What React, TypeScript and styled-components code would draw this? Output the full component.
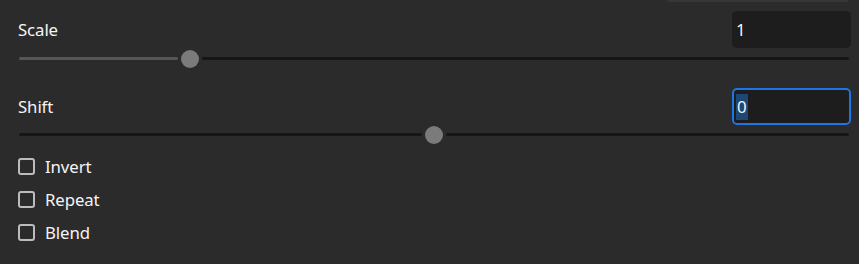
import React from "react";
import styled, { createGlobalStyle } from "styled-components";

const Global = createGlobalStyle`
  html, body { margin: 0; padding: 0; background: #2b2b2b; }
  body { font-family: "Noto Sans", "Open Sans", sans-serif; color: #f2f2f2; }
`;

const Panel = styled.div`
  display: flex;
  flex-direction: column;
  width: 859px;
  height: 264px;
  box-sizing: border-box;
  padding: 0 8px 0 18px;
  background: #2b2b2b;
  overflow: hidden;
`;

const TopStub = styled.div`
  align-self: flex-end;
  width: 182px;
  height: 2px;
  margin-right: 2px;
  background: #363636;
  border-radius: 0 0 4px 4px;
`;

const FieldRow = styled.div<{ $top: number }>`
  display: flex;
  align-items: center;
  justify-content: space-between;
  margin-top: ${(p) => p.$top}px;
`;

const Label = styled.span`
  font-size: 16.8px;
  line-height: 20px;
  letter-spacing: -0.1px;
  color: #f4f4f4;
`;

const ValueBox = styled.div<{ $focused?: boolean }>`
  display: flex;
  align-items: center;
  box-sizing: border-box;
  width: 119px;
  height: 37px;
  padding: 0 0 0 ${(p) => (p.$focused ? 2 : 4)}px;
  background: #1d1d1d;
  border-radius: 5px;
  border: ${(p) => (p.$focused ? "2px solid #1f74e6" : "none")};
  font-size: 16.8px;
  color: #f4f4f4;
`;

const Selected = styled.span`
  background: #1b4877;
  padding: 0 1px;
  line-height: 26px;
`;

const SliderWrap = styled.div<{ $top: number }>`
  position: relative;
  height: 18px;
  margin: ${(p) => p.$top}px 2px 0 1px;
`;

const TrackPart = styled.div<{ $color: string }>`
  position: absolute;
  top: 7px;
  height: 3px;
  border-radius: 2px;
  background: ${(p) => p.$color};
`;

const Thumb = styled.div`
  position: absolute;
  top: 0;
  width: 18px;
  height: 18px;
  margin-left: -9px;
  border-radius: 50%;
  background: #7b7b7b;
`;

const CheckList = styled.div`
  display: flex;
  flex-direction: column;
  margin-top: 6px;
`;

const CheckRow = styled.label`
  display: flex;
  align-items: center;
  gap: 10px;
  height: 33px;
`;

const Box = styled.span`
  box-sizing: border-box;
  width: 17px;
  height: 17px;
  border: 2px solid #bcbcbc;
  border-radius: 3px;
`;

const TRACK_W = 830;
const INSET = 9;

function Slider({ frac, fill, top }: { frac: number; fill: string; top: number }) {
  const cx = INSET + frac * (TRACK_W - 2 * INSET);
  const gap = 3;
  return (
    <SliderWrap $top={top}>
      <TrackPart $color={fill} style={{ left: 0, width: cx - 9 - gap }} />
      <TrackPart $color="#161616" style={{ left: cx + 9 + gap, right: 0 }} />
      <Thumb style={{ left: cx }} />
    </SliderWrap>
  );
}

export default function App() {
  return (
    <>
      <Global />
      <Panel>
        <TopStub />
        <FieldRow $top={9}>
          <Label>Scale</Label>
          <ValueBox>1</ValueBox>
        </FieldRow>
        <Slider frac={0.2} fill="#565656" top={2} />
        <FieldRow $top={20}>
          <Label>Shift</Label>
          <ValueBox $focused>
            <Selected>0</Selected>
          </ValueBox>
        </FieldRow>
        <Slider frac={0.5} fill="#161616" top={1} />
        <CheckList>
          {["Invert", "Repeat", "Blend"].map((t) => (
            <CheckRow key={t}>
              <Box />
              <Label>{t}</Label>
            </CheckRow>
          ))}
        </CheckList>
      </Panel>
    </>
  );
}
